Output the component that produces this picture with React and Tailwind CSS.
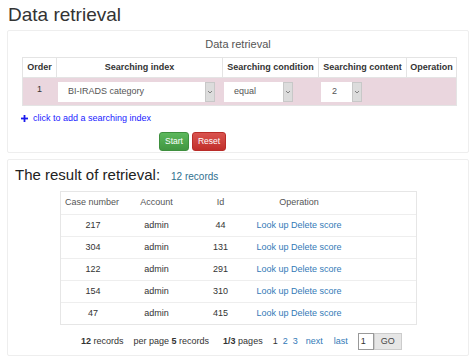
import React from 'react';

const rows = [
  { no: 217, account: 'admin', id: 44 },
  { no: 304, account: 'admin', id: 131 },
  { no: 122, account: 'admin', id: 291 },
  { no: 154, account: 'admin', id: 310 },
  { no: 47, account: 'admin', id: 415 },
];

function FakeSelect({ value, width, textPad }) {
  return (
    <div className={`flex h-[20px] bg-white ${width}`}>
      <div className={`flex-1 flex items-center text-[9px] text-[#555] ${textPad}`}>{value}</div>
      <div className="w-[10px] h-full bg-[#dcdcdc] border border-[#c8c8c8] flex items-center justify-center">
        <svg width="6" height="4" viewBox="0 0 6 4">
          <polyline points="1,1 3,3 5,1" fill="none" stroke="#777" strokeWidth="0.9" />
        </svg>
      </div>
    </div>
  );
}

function App() {
  return (
    <div className="w-[474px] h-[361px] overflow-hidden bg-white text-[#333] font-['Liberation_Sans',Arial,sans-serif]">
      <h1 className="h-[30px] pl-[8px] pt-[3px] text-[19px] leading-[24px]">Data retrieval</h1>

      {/* search panel */}
      <div className="ml-[7px] w-[462px] h-[123px] border border-[#eeeeee] rounded-[2px]">
        <div className="h-[26px] leading-[26px] text-center text-[11px] text-[#555]">Data retrieval</div>
        <div className="ml-[14px] w-[435px] border border-[#e4e4e4]">
          <div className="grid grid-cols-[33px_166px_96px_88px_50px] h-[19px] bg-white text-[9px] font-bold text-[#333]">
            <div className="flex items-center justify-center">Order</div>
            <div className="flex items-center justify-center border-l border-[#e4e4e4]">Searching index</div>
            <div className="flex items-center justify-center border-l border-[#e4e4e4]">Searching condition</div>
            <div className="flex items-center justify-center border-l border-[#e4e4e4]">Searching content</div>
            <div className="flex items-center justify-center border-l border-[#e4e4e4]">Operation</div>
          </div>
          <div className="grid grid-cols-[33px_166px_96px_88px_50px] h-[28px] bg-[#ead6de] border-t border-[#e4e4e4] text-[9px]">
            <div className="flex justify-center pt-[5px]">1</div>
            <div className="flex items-center pl-[2px]">
              <FakeSelect value="BI-IRADS category" width="w-[157px]" textPad="pl-[10px]" />
            </div>
            <div className="flex items-center pl-[2px]">
              <FakeSelect value="equal" width="w-[69px]" textPad="pl-[10px]" />
            </div>
            <div className="flex items-center pl-[3px]">
              <FakeSelect value="2" width="w-[41px]" textPad="pl-[11px]" />
            </div>
            <div></div>
          </div>
        </div>
        <div className="ml-[13px] mt-[5px] h-[15px] flex items-center gap-[5px] text-[9px] text-[#1a1aff]">
          <svg width="7" height="7" viewBox="0 0 7 7">
            <rect x="2.6" y="0" width="1.8" height="7" fill="#1a1aee" />
            <rect x="0" y="2.6" width="7" height="1.8" fill="#1a1aee" />
          </svg>
          <span>click to add a searching index</span>
        </div>
        <div className="mt-[6px] flex gap-[3px] pl-[151px]">
          <button className="w-[30px] h-[19px] rounded-[3px] border border-[#3e8f3e] bg-gradient-to-b from-[#5cb85c] to-[#419641] text-white text-[8.5px]">Start</button>
          <button className="w-[34px] h-[19px] rounded-[3px] border border-[#b92c28] bg-gradient-to-b from-[#d9534f] to-[#c12e2a] text-white text-[8.5px]">Reset</button>
        </div>
      </div>

      {/* result panel */}
      <div className="ml-[7px] mt-[6px] w-[462px] h-[197px] border border-[#eeeeee] rounded-[2px]">
        <div className="h-[31px] pl-[7px] pt-[5px] flex items-baseline">
          <span className="text-[15px] leading-[20px] text-[#222]">The result of retrieval:</span>
          <span className="ml-[11px] text-[10px] text-[#31708f]">12 records</span>
        </div>
        <div className="ml-[52px] w-[357px] border border-[#e6e6e6] text-[9px]">
          <div className="grid grid-cols-[64px_63px_65px_92px_1fr] h-[22px] items-center text-[#555]">
            <div className="pl-[4px]">Case number</div>
            <div className="text-center">Account</div>
            <div className="text-center">Id</div>
            <div className="text-center">Operation</div>
            <div></div>
          </div>
          {rows.map(r => (
            <div key={r.id} className="grid grid-cols-[64px_63px_65px_92px_1fr] h-[22px] items-center border-t border-[#eeeeee]">
              <div className="text-center">{r.no}</div>
              <div className="text-center">{r.account}</div>
              <div className="text-center">{r.id}</div>
              <div className="text-center text-[#337ab7]">Look up Delete score</div>
              <div></div>
            </div>
          ))}
        </div>
        <div className="mt-[8px] pl-[73px] flex items-center h-[17px] text-[9px] text-[#333]">
          <span><b>12</b> records</span>
          <span className="ml-[10px]">per page <b>5</b> records</span>
          <span className="ml-[14px]"><b>1/3</b> pages</span>
          <span className="ml-[10px]">1</span>
          <span className="ml-[5px] text-[#337ab7]">2</span>
          <span className="ml-[5px] text-[#337ab7]">3</span>
          <span className="ml-[8px] text-[#337ab7]">next</span>
          <span className="ml-[11px] text-[#337ab7]">last</span>
          <div className="ml-[10px] w-[16px] h-[17px] border border-[#999] bg-white pl-[2px] leading-[15px]">1</div>
          <div className="w-[28px] h-[17px] border border-[#ccc] bg-[#e6e6e6] flex items-center justify-center text-[#444]">GO</div>
        </div>
      </div>
    </div>
  );
}

export default App;
